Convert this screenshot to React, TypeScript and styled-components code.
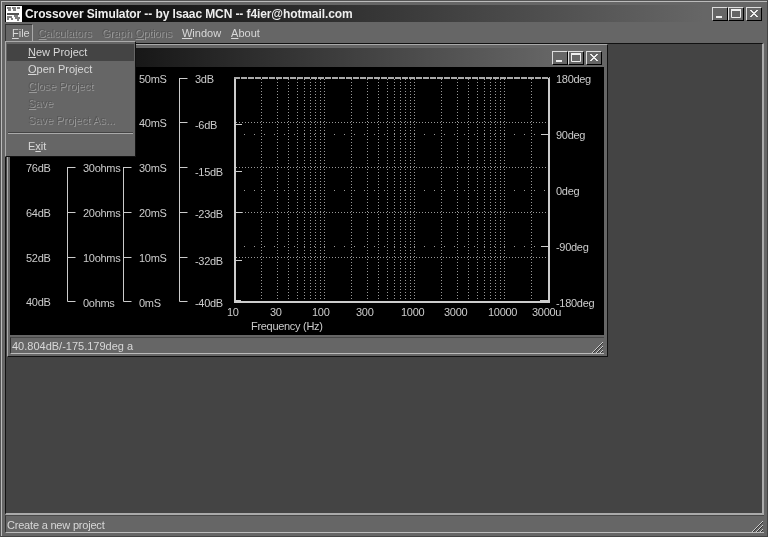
import React from 'react';
import styled, { createGlobalStyle } from 'styled-components';

const GlobalStyle = createGlobalStyle`
    html, body {
        margin: 0;
        padding: 0;
        background: #666;
    }
    #root {
        width: 768px;
        height: 537px;
        overflow: hidden;
    }
`;

const uiFont = `"Liberation Sans", Arial, sans-serif`;

const AppWindow = styled.div`
    position: relative;
    box-sizing: border-box;
    width: 768px;
    height: 537px;
    padding: 4px 3px 3px 4px;
    display: flex;
    flex-direction: column;
    background: #666;
    border: 1px solid #444;
    border-top-color: #555;
    border-left-color: #555;
    box-shadow: inset 1px 1px 0 #bbb;
    font-family: ${uiFont};
    font-size: 11px;
    color: #d8d8d8;
    filter: grayscale(1);
`;

const TitleBar = styled.div`
    height: 17px;
    flex: none;
    display: flex;
    align-items: center;
    gap: 3px;
    padding: 0 2px 0 1px;
    background: linear-gradient(to right, #000 0%, #666 92%);
`;

const ChildTitleBar = styled(TitleBar)`
    height: 19px;
`;

const TitleText = styled.div`
    flex: 1;
    color: #eee;
    font-weight: bold;
    font-size: 12px;
    letter-spacing: -0.1px;
    white-space: nowrap;
`;

const WinButtons = styled.div`
    display: flex;
    align-items: center;
`;

const WinButton = styled.div<{ $gapLeft?: boolean }>`
    box-sizing: border-box;
    width: 16px;
    height: 14px;
    margin-left: ${(p) => (p.$gapLeft ? 2 : 0)}px;
    background: #666;
    border-top: 1px solid #ddd;
    border-left: 1px solid #ddd;
    border-right: 1px solid #000;
    border-bottom: 1px solid #000;
    display: flex;
    align-items: center;
    justify-content: center;
`;

const MenuBar = styled.div`
    height: 21px;
    flex: none;
    display: flex;
    align-items: center;
`;

const MenuLabel = styled.div<{ $open?: boolean; $disabled?: boolean }>`
    box-sizing: border-box;
    height: 18px;
    line-height: 16px;
    padding: ${(p) => (p.$open ? '0 2px 0 6px' : '0 4px')};
    border: 1px solid transparent;
    border-color: ${(p) => (p.$open ? '#333 #aaa #aaa #333' : 'transparent')};
    color: ${(p) => (p.$disabled ? '#585858' : '#d8d8d8')};
    text-shadow: ${(p) => (p.$disabled ? '1px 1px 0 #999' : 'none')};
    letter-spacing: ${(p) => (p.$disabled ? '-0.1px' : '0')};
`;

const Workspace = styled.div`
    flex: 1;
    min-height: 0;
    padding: 0 1px;
    background: #444;
    border-top: 1px solid #111;
    border-left: 1px solid #111;
    border-right: 2px solid #aaa;
    border-bottom: 2px solid #aaa;
`;

const ChildWindow = styled.div`
    box-sizing: border-box;
    width: 601px;
    height: 313px;
    padding: 3px 3px 2px 2px;
    display: flex;
    flex-direction: column;
    background: #666;
    border-top: 1px solid #aaa;
    border-left: 1px solid #aaa;
    border-right: 1px solid #111;
    border-bottom: 1px solid #111;
`;

const PlotArea = styled.div`
    height: 268px;
    flex: none;
    background: #000;
`;

const StatusPanel = styled.div`
    box-sizing: border-box;
    position: relative;
    flex: none;
    padding-left: 1px;
    border-top: 1px solid #484848;
    border-left: 1px solid #333;
    border-bottom: 1px solid #bbb;
`;

const ChildStatus = styled(StatusPanel)`
    height: 17px;
    margin-top: 2px;
    line-height: 17px;
`;

const StatusBar = styled(StatusPanel)`
    height: 18px;
    line-height: 19px;
    letter-spacing: -0.2px;
`;

const Grip = styled.svg`
    position: absolute;
    right: 0;
    bottom: -1px;
`;

const Menu = styled.div`
    position: absolute;
    left: 4px;
    top: 40px;
    box-sizing: border-box;
    width: 131px;
    height: 116px;
    padding: 2px 1px;
    background: #666;
    border-top: 1px solid #aaa;
    border-left: 1px solid #aaa;
    border-right: 1px solid #111;
    border-bottom: 1px solid #111;
    z-index: 2;
`;

const MenuItem = styled.div<{ $active?: boolean; $disabled?: boolean }>`
    height: 17px;
    line-height: 16px;
    padding-left: 21px;
    background: ${(p) => (p.$active ? '#444' : 'transparent')};
    color: ${(p) => (p.$disabled ? '#585858' : '#d8d8d8')};
    text-shadow: ${(p) => (p.$disabled ? '1px 1px 0 #999' : 'none')};
`;

const MenuSeparator = styled.div`
    height: 1px;
    margin: 4px 1px;
    background: #aaa;
    box-shadow: 0 -1px 0 #444;
`;

const ChartText = styled.text`
    font-family: ${uiFont};
    font-size: 11px;
    letter-spacing: -0.3px;
    fill: #ccc;
`;

const AppIcon = () => (
    <svg width="16" height="16" viewBox="0 0 16 16" style={{ flex: 'none' }}>
        <rect width="16" height="16" fill="#fff" />
        <path d="M1 2h4M6 2h4M11 2h3M2 4h3M7 4h3M1 11h5M1 13h2M5 13h2M8 10h4M9 12h5M11 14h2" stroke="#000" />
        <path d="M1 7h12v2H1z" fill="#555" />
    </svg>
);

const MinimizeGlyph = () => (
    <svg width="14" height="12" viewBox="0 0 14 12"><rect x="3" y="8" width="6" height="2" fill="#eee" /></svg>
);
const MaximizeGlyph = () => (
    <svg width="14" height="12" viewBox="0 0 14 12">
        <path d="M2.5 1.5h9v8h-9z" fill="none" stroke="#eee" />
        <rect x="2" y="1" width="10" height="2" fill="#eee" />
    </svg>
);
const CloseGlyph = () => (
    <svg width="14" height="12" viewBox="0 0 14 12"><path d="M3 2l7 7M4 2l7 7M10 2l-7 7M11 2l-7 7" stroke="#eee" /></svg>
);

const WindowControls = () => (
    <WinButtons>
        <WinButton><MinimizeGlyph /></WinButton>
        <WinButton><MaximizeGlyph /></WinButton>
        <WinButton $gapLeft><CloseGlyph /></WinButton>
    </WinButtons>
);

const GripMark = () => (
    <Grip width="13" height="14" viewBox="0 0 13 14">
        <path d="M12 2L1 13M12 6L5 13M12 10L9 13" stroke="#ccc" />
        <path d="M12 3L2 13M12 7L6 13M12 11L10 13" stroke="#333" />
    </Grip>
);

// 90px per decade, 10Hz sits on the left edge of the frame
const freqX = (f: number) => Math.round(224 + 90 * (Math.log10(f) - 1));

const gridFreqs = [
    20, 30, 40, 50, 60, 70, 80, 90, 100,
    200, 300, 400, 500, 600, 700, 800, 900, 1000,
    2000, 3000, 4000, 5000, 6000, 7000, 8000, 9000, 10000,
    20000,
];

const freqLabels: [string, number][] = [
    ['10', 217], ['30', 260], ['100', 302], ['300', 346], ['1000', 391],
    ['3000', 434], ['10000', 478], ['3000u', 522],
];

const chartLabels: [string, number, number][] = [
    ['76dB', 16, 105], ['64dB', 16, 150], ['52dB', 16, 195], ['40dB', 16, 239],
    ['30ohms', 73, 105], ['20ohms', 73, 150], ['10ohms', 73, 195], ['0ohms', 73, 240],
    ['50mS', 129, 16], ['40mS', 129, 60], ['30mS', 129, 105], ['20mS', 129, 150], ['10mS', 129, 195], ['0mS', 129, 240],
    ['3dB', 185, 16], ['-6dB', 185, 62], ['-15dB', 185, 109], ['-23dB', 185, 151], ['-32dB', 185, 198], ['-40dB', 185, 240],
    ['Frequency (Hz)', 241, 263],
    ['180deg', 546, 16], ['90deg', 546, 72], ['0deg', 546, 128], ['-90deg', 546, 184], ['-180deg', 546, 240],
];

const PlotChart = () => (
    <svg width="594" height="268" style={{ display: 'block' }}>
        <path d="M57.5 100V234.5h8M57.5 100.5h8M57.5 145.5h8M57.5 190.5h8" stroke="#ccc" fill="none" />
        <path d="M113.5 100V234.5h8M113.5 100.5h8M113.5 145.5h8M113.5 190.5h8" stroke="#ccc" fill="none" />
        <path d="M169.5 11.5h8M169.5 11V234.5h8M169.5 55.5h8M169.5 100.5h8M169.5 145.5h8M169.5 190.5h8" stroke="#ccc" fill="none" />
        {chartLabels.map(([t, x, y]) => (
            <ChartText key={t} x={x} y={y}>{t}</ChartText>
        ))}
        {gridFreqs.map((f) => (
            <line key={f} x1={freqX(f) + 0.5} x2={freqX(f) + 0.5} y1={12} y2={234} stroke="#999" strokeDasharray="1 2" />
        ))}
        {[55, 100, 145, 190].map((y) => (
            <line key={y} x1={226} x2={539} y1={y + 0.5} y2={y + 0.5} stroke="#999" strokeDasharray="1 2" />
        ))}
        {[67, 123, 179].map((y) => (
            <line key={y} x1={224} x2={539} y1={y + 0.5} y2={y + 0.5} stroke="#999" strokeDasharray="1 9" />
        ))}
        <path d="M225 11V235H539V11" fill="none" stroke="#ccc" strokeWidth="2" />
        <path d="M224 11H540" fill="none" stroke="#aaa" strokeWidth="2" strokeDasharray="6 1" />
        <path d="M225 57.5h7M225 104.5h7M225 145.5h7M225 193.5h7M531 67.5h9M531 179.5h9" stroke="#ccc" />
        <path d="M530 233h9v1h-9zM225 233h6v1h-6z" fill="#ccc" />
        {freqLabels.map(([t, x]) => (
            <ChartText key={t} x={x} y="249">{t}</ChartText>
        ))}
    </svg>
);

const App = () => (
    <>
        <GlobalStyle />
        <AppWindow>
            <TitleBar>
                <AppIcon />
                <TitleText>Crossover Simulator -- by Isaac MCN -- f4ier@hotmail.com</TitleText>
                <WindowControls />
            </TitleBar>
            <MenuBar>
                <MenuLabel $open><u>F</u>ile</MenuLabel>
                <MenuLabel $disabled><u>C</u>alculators</MenuLabel>
                <MenuLabel $disabled>Graph <u>O</u>ptions</MenuLabel>
                <MenuLabel><u>W</u>indow</MenuLabel>
                <MenuLabel><u>A</u>bout</MenuLabel>
            </MenuBar>
            <Workspace>
                <ChildWindow>
                    <ChildTitleBar>
                        <TitleText />
                        <WindowControls />
                    </ChildTitleBar>
                    <PlotArea><PlotChart /></PlotArea>
                    <ChildStatus>40.804dB/-175.179deg a<GripMark /></ChildStatus>
                </ChildWindow>
            </Workspace>
            <StatusBar>Create a new project<GripMark /></StatusBar>
            <Menu>
                <MenuItem $active><u>N</u>ew Project</MenuItem>
                <MenuItem><u>O</u>pen Project</MenuItem>
                <MenuItem $disabled><u>C</u>lose Project</MenuItem>
                <MenuItem $disabled><u>S</u>ave</MenuItem>
                <MenuItem $disabled>Save Project As...</MenuItem>
                <MenuSeparator />
                <MenuItem>E<u>x</u>it</MenuItem>
            </Menu>
        </AppWindow>
    </>
);

export default App;
